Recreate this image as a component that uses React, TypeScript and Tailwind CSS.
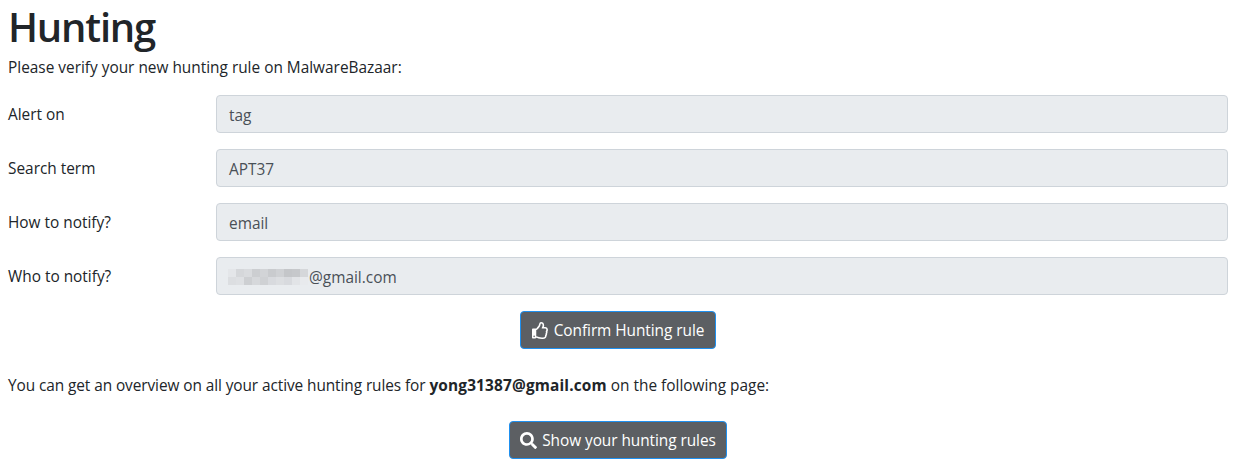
import React from 'react';
import { FaRegThumbsUp, FaSearch } from 'react-icons/fa';

const rows = [
  { label: 'Alert on', value: 'tag' },
  { label: 'Search term', value: 'APT37' },
  { label: 'How to notify?', value: 'email' },
];

const inputCls =
  'flex-1 h-[38px] flex items-center px-3 pt-[3px] bg-[#e9ecef] border border-[#ced4da] rounded text-[#495057]';

const btnCls =
  'h-[38px] flex items-center justify-center gap-[5px] pt-[2px] bg-[#5c5f63] border border-[#1e90f0] rounded text-white tracking-[-0.05px]';

function Blur() {
  const cells = [
    '#e4e6e9', '#d5d7da', '#d9dbde', '#ccced1', '#d2d4d7', '#c9cbce', '#cfd1d4', '#c4c6c9', '#c6c8cb', '#d5d7da',
    '#dcdee1', '#dee0e3', '#cdcfd2', '#d6d8db', '#cfd1d4', '#d8dade', '#dcdee1', '#d8dade', '#e2e4e7', '#e8eaed',
  ];
  return (
    <svg width="82" height="16" viewBox="0 0 80 16" className="shrink-0 -ml-[2px] -mt-[2px]" shapeRendering="crispEdges">
      {cells.map((c, i) => (
        <rect key={i} x={(i % 10) * 8} y={Math.floor(i / 10) * 8} width="8" height="8" fill={c} />
      ))}
    </svg>
  );
}

export default function App() {
  return (
    <div className="px-2 font-['Open_Sans','Noto_Sans',sans-serif] text-[15.4px] text-[#212529] h-[468px] overflow-hidden">
      <h1 className="text-[40px] leading-[48px] font-semibold tracking-[-1.2px] mb-1 pt-[3px]">Hunting</h1>
      <p className="h-6 leading-[26px] mb-4">Please verify your new hunting rule on MalwareBazaar:</p>
      {rows.map((r) => (
        <div key={r.label} className="flex items-center mr-2 mb-4">
          <label className="w-[208px] pt-[2px]">{r.label}</label>
          <div className={inputCls}>{r.value}</div>
        </div>
      ))}
      <div className="flex items-center mr-2 mb-4">
        <label className="w-[208px] pt-[2px]">Who to notify?</label>
        <div className={inputCls}>
          <Blur />
          <span>@gmail.com</span>
        </div>
      </div>
      <div className="flex justify-center pr-2">
        <button className={`${btnCls} w-[196px]`}>
          <FaRegThumbsUp className="w-[17px] h-[17px] -mt-[2px]" />
          Confirm Hunting rule
        </button>
      </div>
      <p className="mt-[25px] h-6 leading-6">
        <span className="tracking-[-0.08px]">You can get an overview on all your active hunting rules for </span>
        <b className="tracking-[0.16px]">yong31387@gmail.com</b> on the following page:
      </p>
      <div className="flex justify-center pr-2 mt-[23px]">
        <button className={`${btnCls} w-[218px]`}>
          <FaSearch className="w-[17px] h-[17px] -mt-[2px]" />
          Show your hunting rules
        </button>
      </div>
    </div>
  );
}
